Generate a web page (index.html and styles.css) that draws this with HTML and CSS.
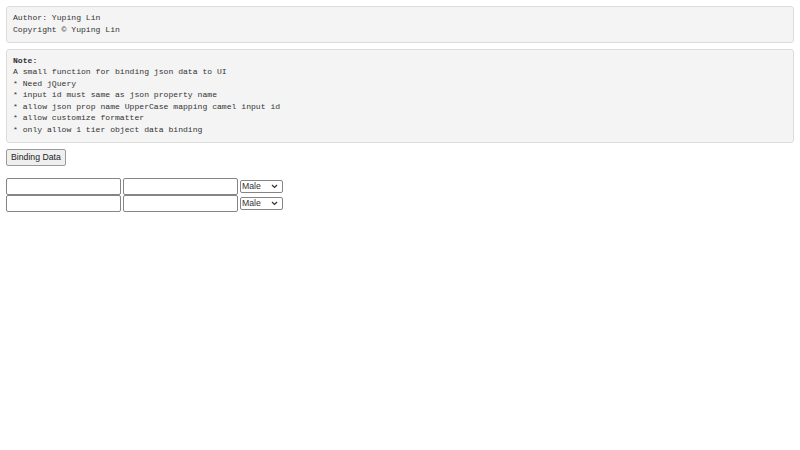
FILE: index.html
```html
<!DOCTYPE html>
<html lang="en">
<head>
    <meta charset="UTF-8">
    <title>Json Binding</title>
    <link rel="stylesheet" href="styles.css">
</head>
<body>
    <pre class="info">Author: Yuping Lin
Copyright © Yuping Lin</pre>
    <pre class="info"><b>Note:</b>
A small function for binding json data to UI
* Need jQuery
* input id must same as json property name
* allow json prop name UpperCase mapping camel input id
* allow customize formatter
* only allow 1 tier object data binding</pre>

    <button class="button" id="btn-binding">Binding Data</button>

    <div class="rows">
        <div class="row">
            <input type="text" class="field" id="name1">
            <input type="text" class="field" id="email1">
            <select class="gender" id="gender1">
                <option>Male</option>
                <option>Female</option>
            </select>
        </div>
        <div class="row">
            <input type="text" class="field" id="name2">
            <input type="text" class="field" id="email2">
            <select class="gender" id="gender2">
                <option>Male</option>
                <option>Female</option>
            </select>
        </div>
    </div>
</body>
</html>
```
FILE: styles.css
```css
body {
    margin: 6px;
    font-family: "Liberation Sans", Arial, sans-serif;
    font-size: 10px;
    background: #fff;
    color: #000;
}

/* blocs d'info en haut */
.info {
    margin: 0 0 6px 0;
    padding: 5px 6px 6.5px 6px;
    background: #f4f4f4;
    border: 1px solid #dcdcdc;
    border-radius: 3px;
    font-family: "Liberation Mono", "Courier New", monospace;
    font-size: 8.1px;
    line-height: 11.5px;
    color: #333;
}

.button {
    display: block;
    height: 17px;
    padding: 0 4px;
    font-family: "Liberation Sans", Arial, sans-serif;
    font-size: 8.7px;
    color: #222;
    background: #efefef;
    border: 1px solid #9a9a9a;
    border-radius: 2px;
}

.rows {
    margin-top: 12px;
}

.row {
    display: flex;
    align-items: center;
    gap: 2px;
}

.field {
    box-sizing: border-box;
    width: 115px;
    height: 17px;
    margin: 0;
    padding: 1px 2px;
    font-size: 10px;
    border: 1px solid #858585;
    border-radius: 2px;
}

.gender {
    box-sizing: border-box;
    width: 43px;
    height: 13px;
    margin: 0;
    padding: 0 0 0 1px;
    appearance: none;
    -webkit-appearance: none;
    font-family: "Liberation Sans", Arial, sans-serif;
    font-size: 8.7px;
    line-height: 11px;
    color: #333;
    background: #fff url("data:image/svg+xml,%3Csvg xmlns='http://www.w3.org/2000/svg' width='7' height='5' viewBox='0 0 7 5'%3E%3Cpath d='M1 1l2.5 2.5L6 1' fill='none' stroke='%23333' stroke-width='1.2'/%3E%3C/svg%3E") no-repeat right 4px center;
    border: 1px solid #858585;
    border-radius: 2px;
}
```
